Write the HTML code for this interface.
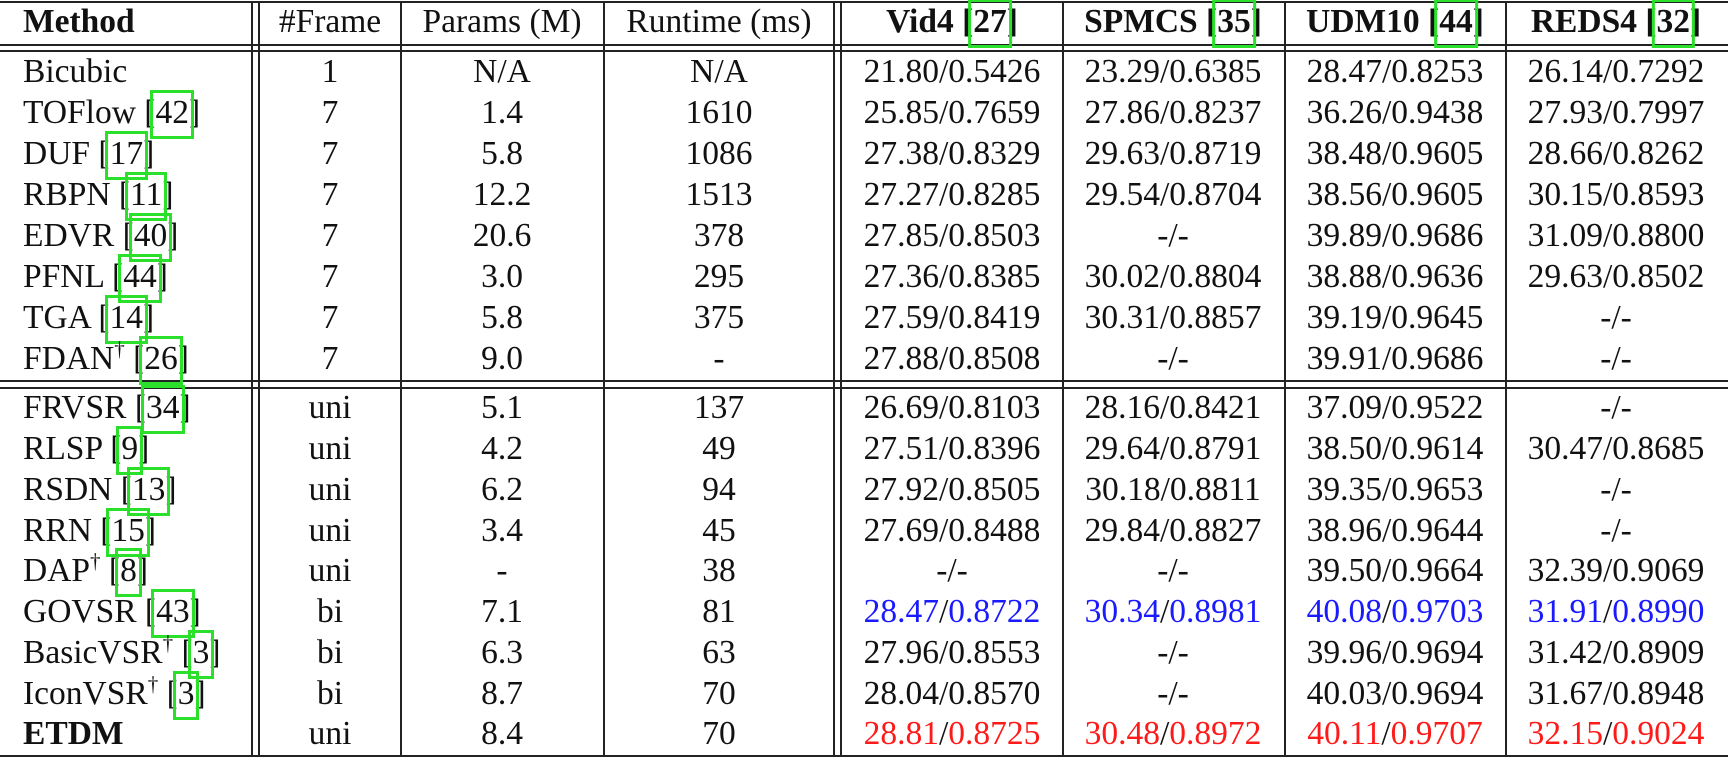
<!DOCTYPE html>
<html><head><meta charset="utf-8"><style>
body{margin:0;width:1728px;height:762px;background:#fff;position:relative;overflow:hidden;font-family:"Liberation Serif",serif;font-size:33.5px;color:#111}
.h{position:absolute;left:0;width:1728px;height:2px;background:#222}
.v{position:absolute;width:1.5px;background:#222}
.r{position:absolute;left:0;width:1728px;height:41px;line-height:41px;white-space:nowrap}
.c{position:absolute;top:0;transform:translateX(-50%)}
.m{position:absolute;left:23px;top:0}
b{font-weight:bold}
.k{position:relative}
.k::after{content:"";position:absolute;left:-5px;right:-5px;top:-4px;bottom:-8px;border:3px solid #2be02b}
sup{font-size:21px;line-height:0;vertical-align:13px}
.bl{color:#1a1aff}.rd{color:#ff1a1a}.s{color:#111}
</style></head><body>
<div class="h" style="top:1px"></div>
<div class="h" style="top:44px"></div>
<div class="h" style="top:50px"></div>
<div class="h" style="top:380px"></div>
<div class="h" style="top:387px"></div>
<div class="h" style="top:755px"></div>

<div class="v" style="left:251px;top:2px;height:753px"></div>
<div class="v" style="left:258px;top:2px;height:753px"></div>
<div class="v" style="left:400px;top:2px;height:753px"></div>
<div class="v" style="left:603px;top:2px;height:753px"></div>
<div class="v" style="left:833px;top:2px;height:753px"></div>
<div class="v" style="left:840px;top:2px;height:753px"></div>
<div class="v" style="left:1062px;top:2px;height:753px"></div>
<div class="v" style="left:1284px;top:2px;height:753px"></div>
<div class="v" style="left:1505px;top:2px;height:753px"></div>

<div class="r" style="top:1px"><span class="m"><b>Method</b></span><span class="c" style="left:330px">#Frame</span><span class="c" style="left:502px">Params (M)</span><span class="c" style="left:719px">Runtime (ms)</span><span class="c" style="left:952px"><b>Vid4 [<span class="k">27</span>]</b></span><span class="c" style="left:1173px"><b>SPMCS [<span class="k">35</span>]</b></span><span class="c" style="left:1395px"><b>UDM10 [<span class="k">44</span>]</b></span><span class="c" style="left:1616px"><b>REDS4 [<span class="k">32</span>]</b></span></div>

<div class="r" style="top:51px"><span class="m">Bicubic</span><span class="c" style="left:330px">1</span><span class="c" style="left:502px">N/A</span><span class="c" style="left:719px">N/A</span><span class="c" style="left:952px">21.80/0.5426</span><span class="c" style="left:1173px">23.29/0.6385</span><span class="c" style="left:1395px">28.47/0.8253</span><span class="c" style="left:1616px">26.14/0.7292</span></div>
<div class="r" style="top:92px"><span class="m">TOFlow [<span class="k">42</span>]</span><span class="c" style="left:330px">7</span><span class="c" style="left:502px">1.4</span><span class="c" style="left:719px">1610</span><span class="c" style="left:952px">25.85/0.7659</span><span class="c" style="left:1173px">27.86/0.8237</span><span class="c" style="left:1395px">36.26/0.9438</span><span class="c" style="left:1616px">27.93/0.7997</span></div>
<div class="r" style="top:133px"><span class="m">DUF [<span class="k">17</span>]</span><span class="c" style="left:330px">7</span><span class="c" style="left:502px">5.8</span><span class="c" style="left:719px">1086</span><span class="c" style="left:952px">27.38/0.8329</span><span class="c" style="left:1173px">29.63/0.8719</span><span class="c" style="left:1395px">38.48/0.9605</span><span class="c" style="left:1616px">28.66/0.8262</span></div>
<div class="r" style="top:174px"><span class="m">RBPN [<span class="k">11</span>]</span><span class="c" style="left:330px">7</span><span class="c" style="left:502px">12.2</span><span class="c" style="left:719px">1513</span><span class="c" style="left:952px">27.27/0.8285</span><span class="c" style="left:1173px">29.54/0.8704</span><span class="c" style="left:1395px">38.56/0.9605</span><span class="c" style="left:1616px">30.15/0.8593</span></div>
<div class="r" style="top:215px"><span class="m">EDVR [<span class="k">40</span>]</span><span class="c" style="left:330px">7</span><span class="c" style="left:502px">20.6</span><span class="c" style="left:719px">378</span><span class="c" style="left:952px">27.85/0.8503</span><span class="c" style="left:1173px">-/-</span><span class="c" style="left:1395px">39.89/0.9686</span><span class="c" style="left:1616px">31.09/0.8800</span></div>
<div class="r" style="top:256px"><span class="m">PFNL [<span class="k">44</span>]</span><span class="c" style="left:330px">7</span><span class="c" style="left:502px">3.0</span><span class="c" style="left:719px">295</span><span class="c" style="left:952px">27.36/0.8385</span><span class="c" style="left:1173px">30.02/0.8804</span><span class="c" style="left:1395px">38.88/0.9636</span><span class="c" style="left:1616px">29.63/0.8502</span></div>
<div class="r" style="top:297px"><span class="m">TGA [<span class="k">14</span>]</span><span class="c" style="left:330px">7</span><span class="c" style="left:502px">5.8</span><span class="c" style="left:719px">375</span><span class="c" style="left:952px">27.59/0.8419</span><span class="c" style="left:1173px">30.31/0.8857</span><span class="c" style="left:1395px">39.19/0.9645</span><span class="c" style="left:1616px">-/-</span></div>
<div class="r" style="top:338px"><span class="m">FDAN<sup>†</sup> [<span class="k">26</span>]</span><span class="c" style="left:330px">7</span><span class="c" style="left:502px">9.0</span><span class="c" style="left:719px">-</span><span class="c" style="left:952px">27.88/0.8508</span><span class="c" style="left:1173px">-/-</span><span class="c" style="left:1395px">39.91/0.9686</span><span class="c" style="left:1616px">-/-</span></div>

<div class="r" style="top:387px"><span class="m">FRVSR [<span class="k">34</span>]</span><span class="c" style="left:330px">uni</span><span class="c" style="left:502px">5.1</span><span class="c" style="left:719px">137</span><span class="c" style="left:952px">26.69/0.8103</span><span class="c" style="left:1173px">28.16/0.8421</span><span class="c" style="left:1395px">37.09/0.9522</span><span class="c" style="left:1616px">-/-</span></div>
<div class="r" style="top:428px"><span class="m">RLSP [<span class="k">9</span>]</span><span class="c" style="left:330px">uni</span><span class="c" style="left:502px">4.2</span><span class="c" style="left:719px">49</span><span class="c" style="left:952px">27.51/0.8396</span><span class="c" style="left:1173px">29.64/0.8791</span><span class="c" style="left:1395px">38.50/0.9614</span><span class="c" style="left:1616px">30.47/0.8685</span></div>
<div class="r" style="top:469px"><span class="m">RSDN [<span class="k">13</span>]</span><span class="c" style="left:330px">uni</span><span class="c" style="left:502px">6.2</span><span class="c" style="left:719px">94</span><span class="c" style="left:952px">27.92/0.8505</span><span class="c" style="left:1173px">30.18/0.8811</span><span class="c" style="left:1395px">39.35/0.9653</span><span class="c" style="left:1616px">-/-</span></div>
<div class="r" style="top:510px"><span class="m">RRN [<span class="k">15</span>]</span><span class="c" style="left:330px">uni</span><span class="c" style="left:502px">3.4</span><span class="c" style="left:719px">45</span><span class="c" style="left:952px">27.69/0.8488</span><span class="c" style="left:1173px">29.84/0.8827</span><span class="c" style="left:1395px">38.96/0.9644</span><span class="c" style="left:1616px">-/-</span></div>
<div class="r" style="top:550px"><span class="m">DAP<sup>†</sup> [<span class="k">8</span>]</span><span class="c" style="left:330px">uni</span><span class="c" style="left:502px">-</span><span class="c" style="left:719px">38</span><span class="c" style="left:952px">-/-</span><span class="c" style="left:1173px">-/-</span><span class="c" style="left:1395px">39.50/0.9664</span><span class="c" style="left:1616px">32.39/0.9069</span></div>
<div class="r" style="top:591px"><span class="m">GOVSR [<span class="k">43</span>]</span><span class="c" style="left:330px">bi</span><span class="c" style="left:502px">7.1</span><span class="c" style="left:719px">81</span><span class="c bl" style="left:952px">28.47<span class="s">/</span>0.8722</span><span class="c bl" style="left:1173px">30.34<span class="s">/</span>0.8981</span><span class="c bl" style="left:1395px">40.08<span class="s">/</span>0.9703</span><span class="c bl" style="left:1616px">31.91<span class="s">/</span>0.8990</span></div>
<div class="r" style="top:632px"><span class="m">BasicVSR<sup>†</sup> [<span class="k">3</span>]</span><span class="c" style="left:330px">bi</span><span class="c" style="left:502px">6.3</span><span class="c" style="left:719px">63</span><span class="c" style="left:952px">27.96/0.8553</span><span class="c" style="left:1173px">-/-</span><span class="c" style="left:1395px">39.96/0.9694</span><span class="c" style="left:1616px">31.42/0.8909</span></div>
<div class="r" style="top:673px"><span class="m">IconVSR<sup>†</sup> [<span class="k">3</span>]</span><span class="c" style="left:330px">bi</span><span class="c" style="left:502px">8.7</span><span class="c" style="left:719px">70</span><span class="c" style="left:952px">28.04/0.8570</span><span class="c" style="left:1173px">-/-</span><span class="c" style="left:1395px">40.03/0.9694</span><span class="c" style="left:1616px">31.67/0.8948</span></div>
<div class="r" style="top:713px"><span class="m"><b>ETDM</b></span><span class="c" style="left:330px">uni</span><span class="c" style="left:502px">8.4</span><span class="c" style="left:719px">70</span><span class="c rd" style="left:952px">28.81<span class="s">/</span>0.8725</span><span class="c rd" style="left:1173px">30.48<span class="s">/</span>0.8972</span><span class="c rd" style="left:1395px">40.11<span class="s">/</span>0.9707</span><span class="c rd" style="left:1616px">32.15<span class="s">/</span>0.9024</span></div>
</body></html>
